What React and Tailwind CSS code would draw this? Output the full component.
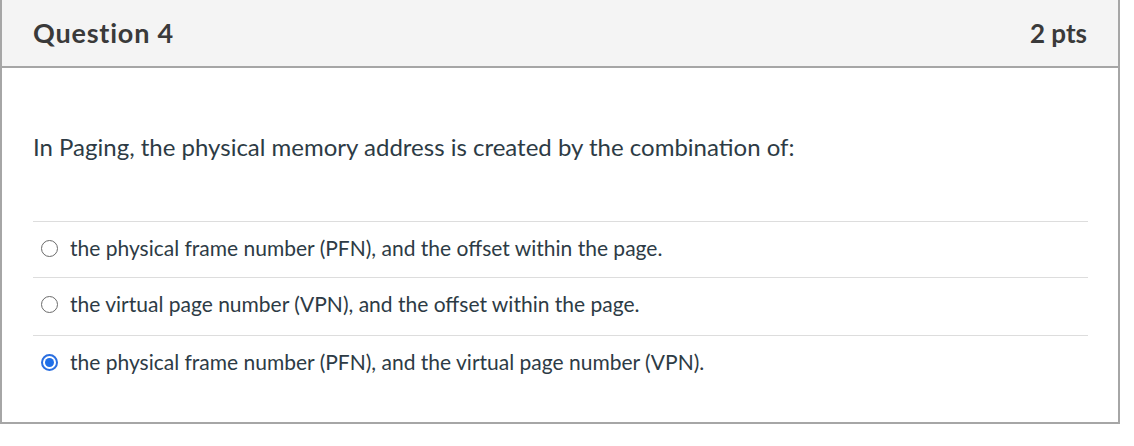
import React from 'react';

const answers = [
  { id: 'a1', label: 'the physical frame number (PFN), and the offset within the page.', checked: false },
  { id: 'a2', label: 'the virtual page number (VPN), and the offset within the page.', checked: false },
  { id: 'a3', label: 'the physical frame number (PFN), and the virtual page number (VPN).', checked: true },
];

const Radio = ({ checked }) =>
  checked ? (
    <span className="flex h-[17px] w-[17px] shrink-0 items-center justify-center rounded-full border-2 border-[#2b6fe0] bg-white">
      <span className="h-[9px] w-[9px] rounded-full bg-[#1f6fe8]" />
    </span>
  ) : (
    <span className="h-[17px] w-[17px] shrink-0 rounded-full border border-[#6b6b6b] bg-white" />
  );

const App = () => {
  return (
    <div className="h-[446px] w-[1134px] bg-white" style={{ fontFamily: 'Lato, "Open Sans", sans-serif' }}>
      <div className="h-[424px] w-[1120px] border-x-2 border-b-2 border-[#a6a6a6]">
        <div className="flex h-[68px] items-center justify-between border-b-2 border-[#a6a6a6] bg-[#f4f4f4] pl-[31px] pr-[31px]">
          <h2 className="text-[27px] font-bold tracking-[0.8px] text-[#3a3a3a]">Question 4</h2>
          <span className="text-[26px] font-bold text-[#3a3a3a]">2 pts</span>
        </div>
        <div className="pl-[31px] pr-[30px] pt-[63px]">
          <p className="text-[24px] leading-[32px] text-[#2d3b45]">
            In Paging, the physical memory address is created by the combination of:
          </p>
          <div className="mt-[58px]">
            {answers.map((a, i) => (
              <div
                key={a.id}
                className={
                  i === 1
                    ? 'flex items-center gap-[12px] border-t border-[#dddddd] pb-[17px] pt-[12px] pl-[8px]'
                    : 'flex items-center gap-[12px] border-t border-[#dddddd] pb-[15px] pt-[12px] pl-[8px]'
                }
              >
                <Radio checked={a.checked} />
                <span className="text-[21px] leading-[28px] text-[#2d3b45]">{a.label}</span>
              </div>
            ))}
          </div>
        </div>
      </div>
    </div>
  );
};

export default App;
